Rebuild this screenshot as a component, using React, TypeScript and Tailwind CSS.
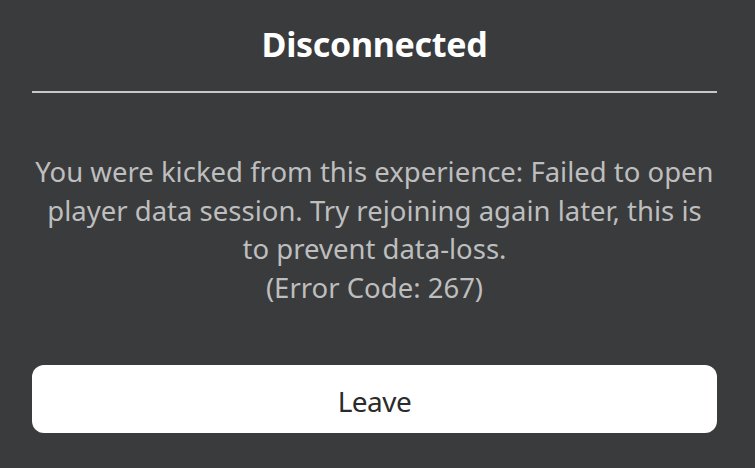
const lines = [
  "You were kicked from this experience: Failed to open",
  "player data session. Try rejoining again later, this is",
  "to prevent data-loss.",
  "(Error Code: 267)",
];

export default function App() {
  return (
    <div className="flex h-[468px] w-[755px] flex-col overflow-hidden bg-[#393b3d] pl-[32px] pr-[38px] pt-[24px] font-['Noto_Sans',sans-serif]">
      <h1 className="text-center text-[34px] font-bold leading-[40px] tracking-[-0.3px] text-white">
        Disconnected
      </h1>
      <div className="mt-[27px] h-[2px] w-full bg-[#c8c8c8]" />
      <div className="mt-[60px] flex flex-col items-center text-[27.5px] leading-[38.5px] text-[#bebebe]">
        {lines.map((l) => (
          <span key={l} className="whitespace-nowrap">
            {l}
          </span>
        ))}
      </div>
      <button className="mt-[58px] flex h-[68px] w-full items-center justify-center rounded-[12px] bg-white pt-[4px] text-[28px] leading-[38px] tracking-[-0.5px] text-[#2b2b2b]">
        Leave
      </button>
    </div>
  );
}
